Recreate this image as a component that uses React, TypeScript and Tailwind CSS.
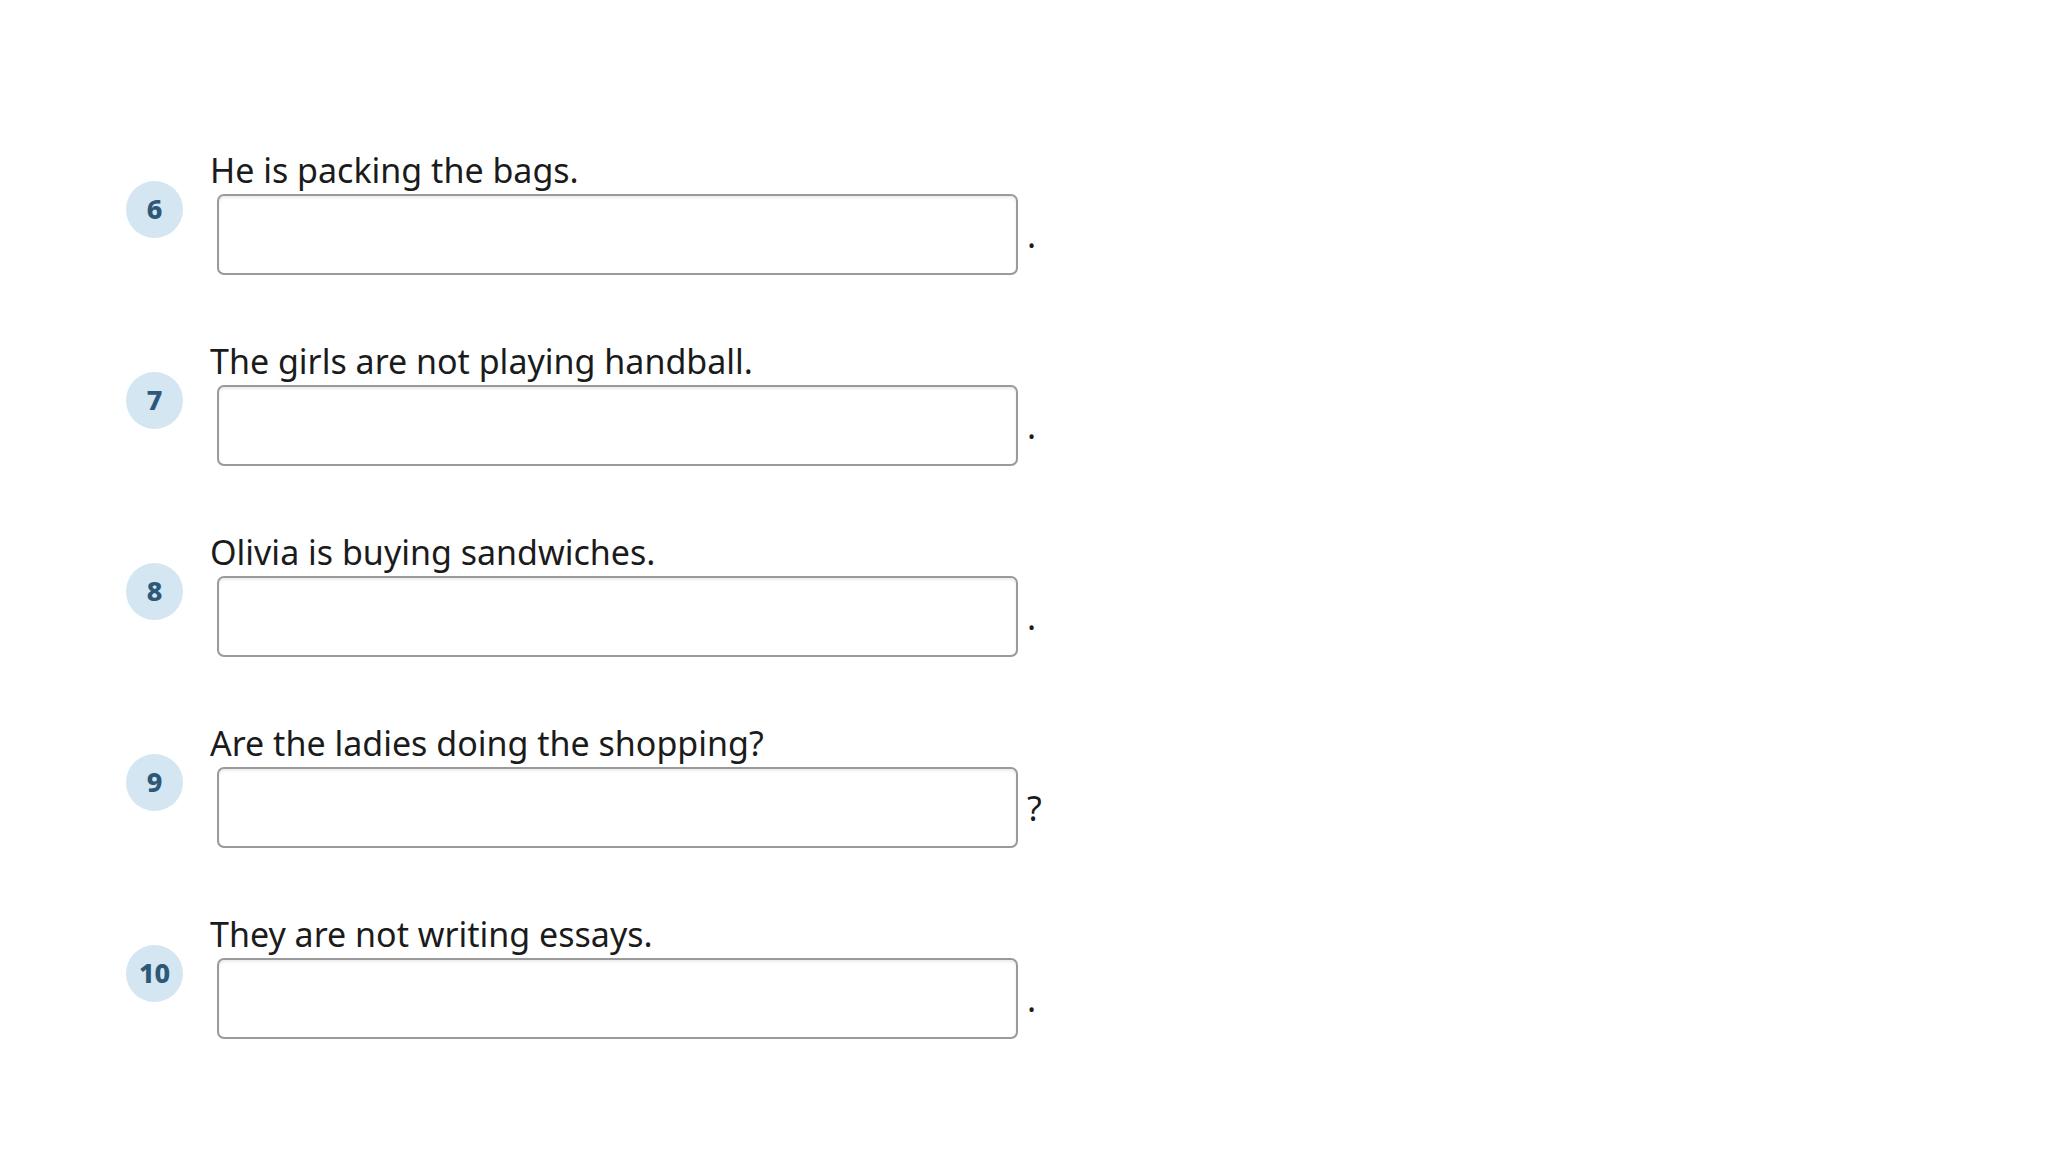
import React from "react";

const items = [
  { n: 6, text: "He is packing the bags.", end: "." },
  { n: 7, text: "The girls are not playing handball.", end: "." },
  { n: 8, text: "Olivia is buying sandwiches.", end: "." },
  { n: 9, text: "Are the ladies doing the shopping?", end: "?" },
  { n: 10, text: "They are not writing essays.", end: "." },
];

export default function App() {
  return (
    <div
      className="w-[2048px] h-[1152px] bg-white overflow-hidden"
      style={{ fontFamily: '"Noto Sans", "Open Sans", sans-serif' }}
    >
      <div className="flex flex-col gap-[62px] pt-[146px] pl-[126px]">
        {items.map((it) => (
          <div key={it.n} className="flex items-center">
            <div className="mb-[2px] w-[57px] h-[57px] rounded-full bg-[#d3e6f2] flex items-center justify-center text-[27px] font-extrabold text-[#2d5878] shrink-0">
              {it.n}
            </div>
            <div className="ml-[27px] flex flex-col">
              <div className="text-[34px] leading-[48px] text-[#1b1b1b]">{it.text}</div>
              <div className="flex items-center">
                <div className="ml-[7px] w-[801px] h-[81px] rounded-[7px] border-2 border-[#9a9a9a] bg-white shadow-[inset_0_2px_3px_rgba(0,0,0,0.08)]" />
                <span className="ml-[9px] text-[34px] leading-[46px] text-[#1b1b1b]">{it.end}</span>
              </div>
            </div>
          </div>
        ))}
      </div>
    </div>
  );
}
